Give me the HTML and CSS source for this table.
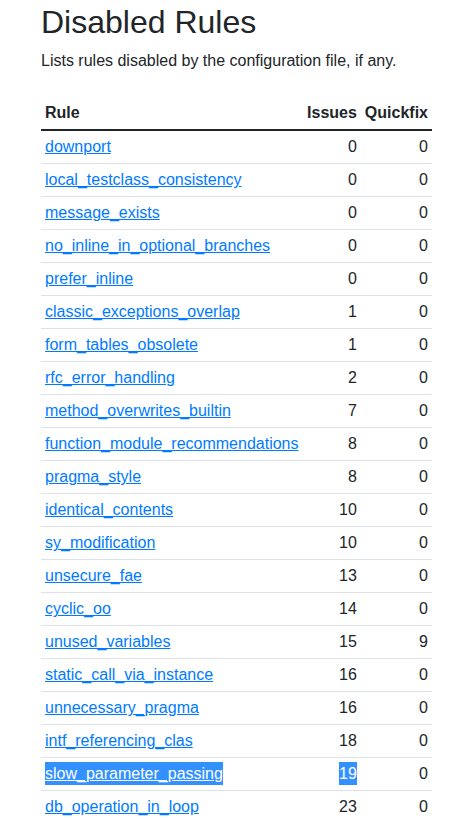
FILE: index.html
```html
<!DOCTYPE html>
<html lang="en">
<head>
    <meta charset="UTF-8">
    <meta name="viewport" content="width=device-width, initial-scale=1.0">
    <title>Disabled Rules</title>
    <link rel="stylesheet" href="styles.css">
</head>
<body>
    <div class="container">
        <h1>Disabled Rules</h1>
        <p class="lead-text">Lists rules disabled by the configuration file, if any.</p>

        <table class="rules">
            <thead>
                <tr>
                    <th>Rule</th>
                    <th class="num">Issues</th>
                    <th class="num">Quickfix</th>
                </tr>
            </thead>
            <tbody>
                <tr><td><a href="#">downport</a></td><td class="num">0</td><td class="num">0</td></tr>
                <tr><td><a href="#">local_testclass_consistency</a></td><td class="num">0</td><td class="num">0</td></tr>
                <tr><td><a href="#">message_exists</a></td><td class="num">0</td><td class="num">0</td></tr>
                <tr><td><a href="#">no_inline_in_optional_branches</a></td><td class="num">0</td><td class="num">0</td></tr>
                <tr><td><a href="#">prefer_inline</a></td><td class="num">0</td><td class="num">0</td></tr>
                <tr><td><a href="#">classic_exceptions_overlap</a></td><td class="num">1</td><td class="num">0</td></tr>
                <tr><td><a href="#">form_tables_obsolete</a></td><td class="num">1</td><td class="num">0</td></tr>
                <tr><td><a href="#">rfc_error_handling</a></td><td class="num">2</td><td class="num">0</td></tr>
                <tr><td><a href="#">method_overwrites_builtin</a></td><td class="num">7</td><td class="num">0</td></tr>
                <tr><td><a href="#">function_module_recommendations</a></td><td class="num">8</td><td class="num">0</td></tr>
                <tr><td><a href="#">pragma_style</a></td><td class="num">8</td><td class="num">0</td></tr>
                <tr><td><a href="#">identical_contents</a></td><td class="num">10</td><td class="num">0</td></tr>
                <tr><td><a href="#">sy_modification</a></td><td class="num">10</td><td class="num">0</td></tr>
                <tr><td><a href="#">unsecure_fae</a></td><td class="num">13</td><td class="num">0</td></tr>
                <tr><td><a href="#">cyclic_oo</a></td><td class="num">14</td><td class="num">0</td></tr>
                <tr><td><a href="#">unused_variables</a></td><td class="num">15</td><td class="num">9</td></tr>
                <tr><td><a href="#">static_call_via_instance</a></td><td class="num">16</td><td class="num">0</td></tr>
                <tr><td><a href="#">unnecessary_pragma</a></td><td class="num">16</td><td class="num">0</td></tr>
                <tr><td><a href="#">intf_referencing_clas</a></td><td class="num">18</td><td class="num">0</td></tr>
                <tr><td><a href="#" class="selected">slow_parameter_passing</a></td><td class="num"><span class="selected">19</span></td><td class="num">0</td></tr>
                <tr><td><a href="#">db_operation_in_loop</a></td><td class="num">23</td><td class="num">0</td></tr>
            </tbody>
        </table>
    </div>
</body>
</html>
```

FILE: styles.css
```css
body {
    margin: 0;
    font-family: "Liberation Sans", Arial, sans-serif;
    font-size: 16px;
    line-height: 24px;
    color: #212529;
    background: #fff;
}
.container {
    padding: 0 20px 0 41px;
}
h1 {
    font-size: 32px;
    font-weight: normal;
    line-height: 1.2;
    margin: 3px 0 8px;
}
.lead-text {
    margin: 0 0 24px;
}
.rules {
    width: 100%;
    border-collapse: collapse;
}
.rules th,
.rules td {
    padding: 4px;
    text-align: left;
    vertical-align: top;
}
.rules th {
    font-weight: bold;
    border-bottom: 2px solid #212529;
}
.rules td {
    border-bottom: 1px solid #dee2e6;
}
.rules .num {
    text-align: right;
    width: 1%;
    white-space: nowrap;
}
.rules a {
    color: #007bff;
    text-decoration: underline;
}
.selected {
    background-color: #3390ff;
    color: #fff !important;
    padding: 3px 0;
}
```
